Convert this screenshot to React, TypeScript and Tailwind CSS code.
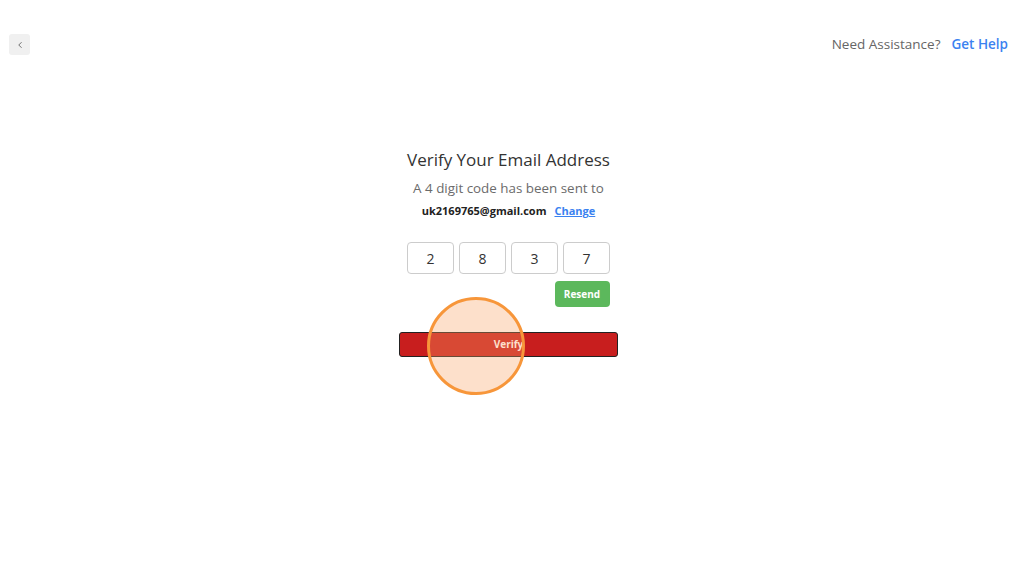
import { ChevronLeft } from "lucide-react";

const DIGITS = ["2", "8", "3", "7"];

export default function App() {
  return (
    <div
      className="relative w-[1030px] h-[587px] bg-white overflow-hidden"
      style={{ fontFamily: '"Open Sans", "Liberation Sans", sans-serif' }}
    >
      {/* Top bar */}
      <div className="flex items-center justify-between pl-[9px] pr-[22px] pt-[34px]">
        <button className="w-[21px] h-[21px] rounded-[3px] bg-[#f0f0f0] flex items-center justify-center">
          <ChevronLeft className="w-[10px] h-[10px] text-[#555]" strokeWidth={2} />
        </button>
        <div className="flex items-center gap-[11px] text-[13.5px]">
          <span className="text-[#666]">Need Assistance?</span>
          <a className="text-[#3b82f0] font-semibold">Get Help</a>
        </div>
      </div>

      {/* Verify card */}
      <div className="flex flex-col items-center pr-[13px] pt-[94px]">
        <h1 className="text-[17px] leading-[22px] text-[#333]">Verify Your Email Address</h1>
        <p className="mt-[7px] text-[13.4px] leading-[20px] text-[#6b6b6b]">
          A 4 digit code has been sent to
        </p>
        <div className="mt-[5px] flex items-center gap-[8px] text-[11px] leading-[16px]">
          <span className="font-bold text-[#222]">uk2169765@gmail.com</span>
          <a className="font-bold text-[#3b82f0] underline">Change</a>
        </div>

        <div className="mt-[23px] flex gap-[5px]">
          {DIGITS.map((d, i) => (
            <div
              key={i}
              className="w-[47px] h-[32px] border border-[#ccc] rounded-[4px] flex items-center justify-center text-[14px] text-[#333]"
            >
              {d}
            </div>
          ))}
        </div>

        <div className="w-[202px] flex justify-end mt-[7px]">
          <button className="w-[55px] h-[26px] rounded-[4px] bg-[#5cb85c] text-white text-[10px] font-bold">
            Resend
          </button>
        </div>

        <button className="mt-[25px] w-[219px] h-[25px] rounded-[3px] border border-[#222] bg-[#c81e1e] text-white text-[10px] font-bold">
          Verify
        </button>
      </div>

      {/* Click indicator */}
      <div className="absolute left-[427px] top-[297px] w-[98px] h-[98px] rounded-full border-[3px] border-[#f7963a] bg-[#f9a060]/[0.33]" />
    </div>
  );
}
